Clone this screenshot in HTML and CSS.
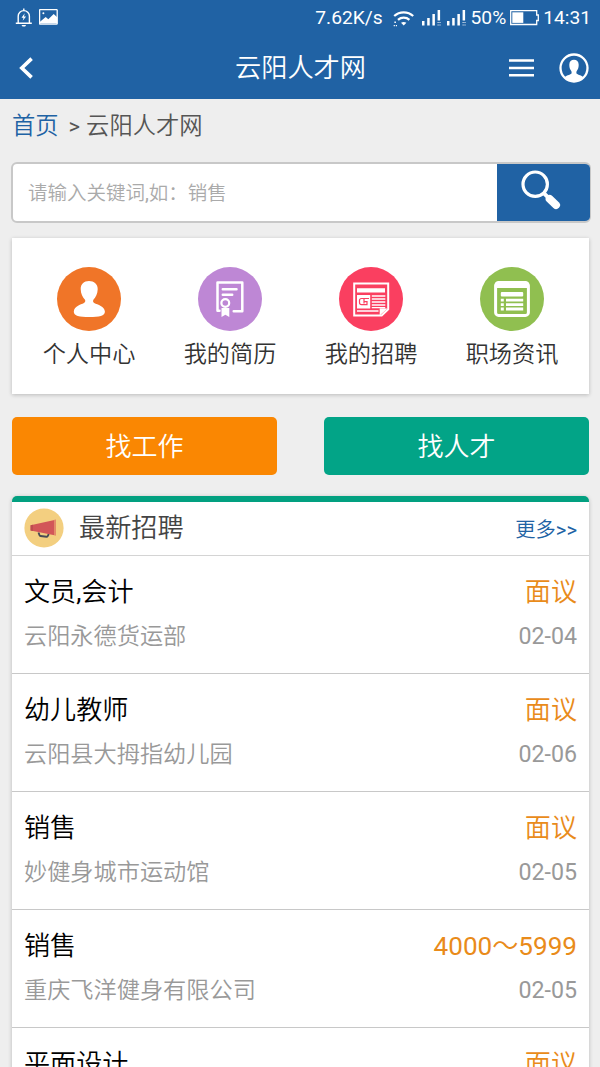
FILE: index.html
```html
<!DOCTYPE html>
<html lang="zh-CN">
<head>
<meta charset="utf-8">
<title>云阳人才网</title>
<link rel="stylesheet" href="styles.css">
</head>
<body>
<div class="screen">
  <header class="top">
    <div class="status">
      <div class="status-left">
        <svg width="18" height="20" viewBox="0 0 18 20" fill="none" stroke="#fff" stroke-width="1.4"><path d="M3.2 14.5V8.2a5.6 5.6 0 0 1 11.2 0v6.3M.8 15.2h16M8.8 2.6V.6"/><path d="M6.5 17h4.600l-1 1.400H7.500z" fill="#fff" stroke="none"/><path d="M9.700 5.300 6.500 9.800h2l-.8 3 3.400-4.400H9z" fill="#fff" stroke="none"/></svg>
        <svg width="19" height="16" viewBox="0 0 19 16"><rect x=".6" y=".6" width="17.600" height="14.600" rx=".7" fill="none" stroke="#fff" stroke-width="1.300"/><path d="M1 14.600v-1.800L6.700 8l2.600 2.300L14.700 5l3.500 3.300v6.300z" fill="#fff"/><circle cx="4.400" cy="4.300" r="1" fill="#fff"/></svg>
      </div>
      <div class="status-right">
        <span class="speed">7.62K/s</span>
        <svg class="wifi" width="22" height="17" viewBox="0 0 22 17"><path d="M1.200 6a14 14 0 0 1 19 0M5 9.900a8.500 8.500 0 0 1 11.400 0" fill="none" stroke="#fff" stroke-width="2.200"/><path d="M8 12.800q2.700-1.600 5.400 0L10.700 15.500z" fill="#fff"/><path d="M1.400 11.500h1.500v1.500h-1.500zM.7 15h1.200v1.200H.7zM2.800 15H4v1.200H2.800z" fill="#fff"/></svg>
        <svg class="signal" width="19" height="16" viewBox="0 0 19 16" fill="#fff"><path d="M0 11h2.500v4.500H0zM5.200 8h2.500v7.500H5.200zM10.400 4h2.500v11.500h-2.500zM15.600 0h2.500v10.500h-2.500zM15.600 12h1v1h-1zM17.500 12h1v1h-1zM15.600 14.500h1v1h-1zM17.500 14.500h1v1h-1z"/></svg>
        <svg class="signal second" width="19" height="16" viewBox="0 0 19 16" fill="#fff"><path d="M0 11h2.500v4.500H0zM5.200 8h2.500v7.500H5.200zM10.400 4h2.500v11.500h-2.500zM15.600 0h2.500v10.500h-2.500zM15.600 12h1v1h-1zM17.500 12h1v1h-1zM15.600 14.500h1v1h-1zM17.500 14.500h1v1h-1z"/></svg>
        <span class="percent">50%</span>
        <svg class="battery" width="29" height="16" viewBox="0 0 29 16"><path d="M.7.700h26V5h1.600v5.500h-1.600v4H.7z" fill="none" stroke="#fff" stroke-width="1.300"/><path d="M2.300 2.300h11v10.600h-11z" fill="#fff"/></svg>
        <span class="clock">14:31</span>
      </div>
    </div>
    <nav class="bar">
      <svg class="back" width="16" height="22" viewBox="0 0 16 22"><path d="M13.600 1.600 3.800 11l9.800 9.400" fill="none" stroke="#fff" stroke-width="3.600"/></svg>
      <h1 class="title">云阳人才网</h1>
      <div class="actions">
        <svg width="25" height="18" viewBox="0 0 25 18"><path d="M0 1.500h25M0 9h25M0 16.300h25" stroke="#fff" stroke-width="2.400"/></svg>
        <svg width="30" height="30" viewBox="0 0 30 30"><circle cx="15" cy="15" r="13.500" fill="none" stroke="#fff" stroke-width="2.300"/><path d="M5.100 24.700c1.300-2.100 6.200-3 7.200-4 .6-.8.300-2.300-.2-3-1.200-1.500-1.800-3.400-1.800-6 0-3.200 2-4.900 4.700-4.900s4.700 1.700 4.700 4.900c0 2.600-.6 4.500-1.800 6-.5.700-.8 2.200-.2 3 1 1 5.900 1.900 7.200 4a14 14 0 0 1-19.800 0z" fill="#fff"/></svg>
      </div>
    </nav>
  </header>

  <div class="crumbs"><a class="home">首页</a><span class="sep">&gt;</span><span>云阳人才网</span></div>

  <main class="content">
    <form class="search">
      <div class="field">请输入关键词,如：销售</div>
      <div class="go">
        <svg width="40" height="40" viewBox="0 0 40 40"><circle cx="14.200" cy="14.200" r="12.200" fill="none" stroke="#fff" stroke-width="3.200"/><path d="m22.800 23.100 5.500 5.500" stroke="#fff" stroke-width="4"/><path d="m28.600 28.900 6.500 6.200" stroke="#fff" stroke-width="7.800" stroke-linecap="round"/></svg>
      </div>
    </form>

    <section class="card menu">
      <div class="entry">
        <svg width="64" height="64" viewBox="0 0 64 64"><circle cx="32" cy="32" r="32" fill="#f07528"/><path d="M32 14c-5 0-8.500 3.200-8.300 8.200.1 4.500 2 8 4.300 10.500.6 1.400.3 2.500-1 3.200-3.500 1.800-9.900 3-10.200 8.600-.2 4.500 5.700 5.500 15.600 5.500S48 49 47.900 44.500c-.3-5.600-7.200-6.800-10.700-8.600-1.300-.7-1.400-1.800-.8-3.200 2.300-2.500 4.200-6 4.300-10.500C40.900 17.200 37 14 32 14z" fill="#fff"/></svg>
        <span>个人中心</span>
      </div>
      <div class="entry">
        <svg width="64" height="64" viewBox="0 0 64 64"><circle cx="32" cy="32" r="32" fill="#be87d5"/><g fill="none" stroke="#fff" stroke-width="2.500" stroke-linecap="round" stroke-linejoin="round"><path d="M21.500 43.800h-2V15.600h24.800v28.600h-8.600"/><path d="M24.800 22.300h13.700M24.800 27.800h9.400"/><circle cx="27.300" cy="36" r="3.900" stroke-width="2.200"/></g><path d="M23.500 41h7.800v9l-3.900-2.200-3.900 2.200z" fill="#fff"/></svg>
        <span>我的简历</span>
      </div>
      <div class="entry">
        <svg width="64" height="64" viewBox="0 0 64 64"><circle cx="32" cy="32" r="32" fill="#fa3f60"/><g fill="none" stroke="#fff" stroke-width="2"><path d="M15.200 16.500h34v25.700l-6.500 6.200H15.200z"/><path d="M32.800 28.900h13.500M32.800 31.900h13.500M32.800 34.900h13.500M32.800 37.900h13.500M18 43.900h21.500" stroke-width="1.500"/></g><path d="M18 21.300h28v4.200H18zM18 27.900h13.200v13.700H18zM32.800 39.900h13.400v1.400H32.800zM40.700 41.500h7.800l-7.800 7z" fill="#fff"/><path d="M26 31.500h-3.500q-2 0-2 2v2q0 2.200 2 2.200H28v-3h-3.500M30 31.500h-5v5" fill="none" stroke="#fa3f60" stroke-width="1.200"/></svg>
        <span>我的招聘</span>
      </div>
      <div class="entry">
        <svg width="64" height="64" viewBox="0 0 64 64"><circle cx="32" cy="32" r="32" fill="#90bf50"/><rect x="15.600" y="15.600" width="32.800" height="32.800" rx="3" fill="none" stroke="#fff" stroke-width="3"/><path d="M15.500 15.500h33v5.500h-33z" fill="#fff"/><rect x="20.800" y="25" width="22.400" height="4.600" rx="1" fill="#fff"/><path d="M20.800 31.800h3v2.800h-3zM20.800 36.200h3V39h-3zM20.800 40.600h3v2.800h-3zM26 31.800h17.200v2.800H26zM26 36.200h17.200V39H26zM26 40.600h17.200v2.800H26z" fill="#fff"/></svg>
        <span>职场资讯</span>
      </div>
    </section>

    <div class="buttons">
      <div class="btn jobs">找工作</div>
      <div class="btn talent">找人才</div>
    </div>

    <section class="card panel">
      <div class="panel-head">
        <svg width="40" height="40" viewBox="0 0 40 40"><circle cx="20" cy="20" r="19.600" fill="#f3cf80"/><path d="m14.500 24.500 1 2.700q.3.700 1 .8l6 .8q.8 0 1.200-.7l1.100-2.100" fill="none" stroke="#484b55" stroke-width="1.900"/><path d="M6.600 17.200 30.500 12v15.300L6.600 22.500z" fill="#d25658"/><path d="M6.600 17.200 9 16.700V23l-2.400-.5z" fill="#bd4e50"/><path d="m30.300 11.800 1.700-.3v16.300l-1.700-.5z" fill="#e48969"/></svg>
        <h2>最新招聘</h2>
        <a class="more">更多&gt;&gt;</a>
      </div>
      <div class="row"><div class="line"><b>文员,会计</b><em>面议</em></div><div class="sub"><span>云阳永德货运部</span><time>02-04</time></div></div>
      <div class="row"><div class="line"><b>幼儿教师</b><em>面议</em></div><div class="sub"><span>云阳县大拇指幼儿园</span><time>02-06</time></div></div>
      <div class="row"><div class="line"><b>销售</b><em>面议</em></div><div class="sub"><span>妙健身城市运动馆</span><time>02-05</time></div></div>
      <div class="row"><div class="line"><b>销售</b><em>4000～5999</em></div><div class="sub"><span>重庆飞洋健身有限公司</span><time>02-05</time></div></div>
      <div class="row"><div class="line"><b>平面设计</b><em>面议</em></div></div>
    </section>
  </main>
</div>
</body>
</html>
```
FILE: styles.css
```css
* { box-sizing: border-box; }
body {
  margin: 0;
  background: #eee;
  color: #333;
  font-family: Roboto, "Noto Sans CJK SC DemiLight", "Noto Sans CJK SC Light", "Noto Sans CJK SC", sans-serif;
}
svg { display: block; flex: none; }
h1, h2, b, em { margin: 0; font-weight: 400; font-style: normal; }
.screen { width: 600px; height: 1067px; overflow: hidden; }

.top { height: 99px; background: #2062a4; color: #fff; }
.status { display: flex; justify-content: space-between; height: 36px; padding: 0 9px 0 15px; }
.status-left { display: flex; gap: 6px; padding-top: 8px; }
.status-left svg:last-child { margin-top: 1px; }
.status-right { display: flex; align-items: center; font-size: 19.200px; line-height: 36px; }
.wifi { margin-left: 10px; }
.signal { margin-left: 7px; }
.second { margin-left: 6px; }
.percent { margin-left: 5px; }
.battery { margin-left: 4px; }
.clock { margin-left: 4px; }

.bar { display: grid; grid-template-columns: 94px 1fr 100px; align-items: center; height: 63px; padding: 0 11px 0 18px; }
.title { font-size: 26.200px; line-height: 62px; text-align: center; }
.actions { display: flex; align-items: center; justify-content: flex-end; gap: 25px; }

.crumbs { display: flex; height: 63px; padding-left: 12px; font-size: 23.300px; line-height: 55px; color: #555; }
.home { color: #2062a4; }
.sep { margin: 0 6px 0 10px; font-size: 22px; }

.content { padding: 0 11px 0 12px; }
.search { display: flex; width: 580px; height: 61px; margin: 0 0 15px -1px; border: 2px solid #c8c8c8; border-right-width: 1px; border-radius: 6px; background: #fff; overflow: hidden; }
.field { flex: 1; padding-left: 15px; font-size: 19.500px; line-height: 60px; color: #aaa; }
.go { display: flex; justify-content: center; width: 93px; padding: 6px 5px 0 0; background: #2062a4; }

.card { background: #fff; box-shadow: 0 1px 4px rgba(0, 0, 0, .22); }
.menu { display: grid; grid-template-columns: repeat(4, 141px); justify-content: center; height: 156px; padding-top: 29px; }
.entry { display: flex; flex-direction: column; align-items: center; font-size: 23.200px; line-height: 47px; }

.buttons { display: flex; justify-content: space-between; margin: 23px 0 21px; }
.btn { width: 265px; height: 58px; border-radius: 5px; color: #fff; font-size: 26px; line-height: 60px; text-align: center; }
.jobs { background: #fa8702; }
.talent { background: #02a487; }

.panel { border-top: 6px solid #02a080; border-radius: 5px 5px 0 0; }
.panel-head { display: flex; align-items: center; height: 54px; padding: 0 12px 2px; border-bottom: 1.500px solid #d4d4d4; }
.panel-head h2 { flex: 1; margin-left: 15px; font-size: 26.200px; line-height: 52px; color: #444; }
.more { font-size: 20.300px; color: #2062a4; }
.row { height: 118px; padding: 13px 12px 0; border-bottom: 1.500px solid #c8c8c8; }
.line, .sub { display: flex; justify-content: space-between; }
.line { height: 46px; font-size: 26.100px; line-height: 47px; color: #000; }
.line em { color: #e98b1a; }
.sub { font-size: 23.200px; line-height: 42px; color: #999; }
```
